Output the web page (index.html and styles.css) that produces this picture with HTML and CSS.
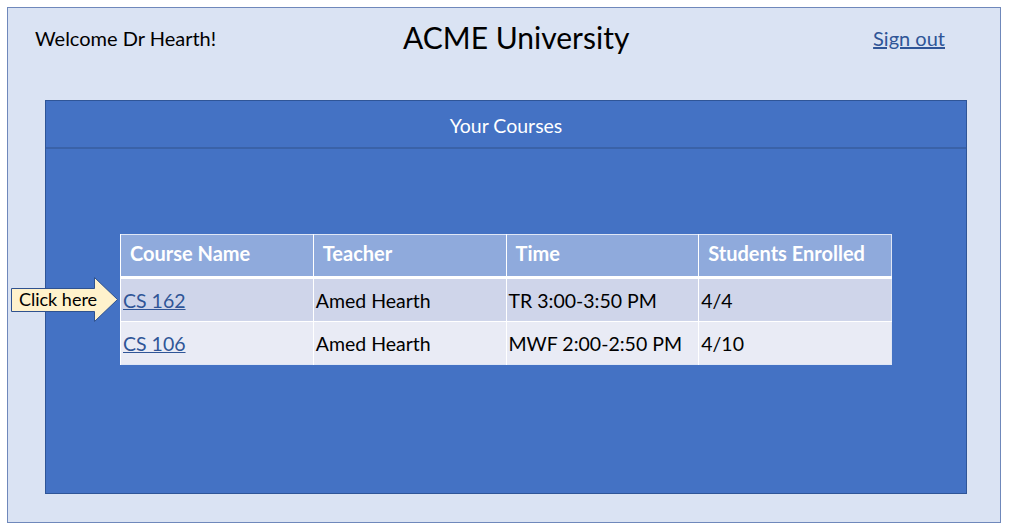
FILE: index.html
```html
<!DOCTYPE html>
<html lang="en">
<head>
  <meta charset="UTF-8" />
  <title>Your Courses - ACME University</title>
  <link rel="stylesheet" href="styles.css">
</head>
<body>

  <div class="frame">
    <header class="top-bar">
      <div class="welcome">Welcome Dr Hearth!</div>
      <h1 class="title">ACME University</h1>
      <a class="sign-out" href="#">Sign out</a>
    </header>

    <section class="panel">
      <div class="panel-head">Your Courses</div>
      <div class="panel-body">
        <table class="courses">
          <thead>
            <tr><th>Course Name</th><th>Teacher</th><th>Time</th><th>Students Enrolled</th></tr>
          </thead>
          <tbody>
            <tr class="odd">
              <td><a href="#">CS 162</a></td><td>Amed Hearth</td><td>TR 3:00-3:50 PM</td><td>4/4</td>
            </tr>
            <tr class="even">
              <td><a href="#">CS 106</a></td><td>Amed Hearth</td><td>MWF 2:00-2:50 PM</td><td>4/10</td>
            </tr>
          </tbody>
        </table>
      </div>
    </section>

    <!-- callout pointing at the first course -->
    <div class="callout">
      <svg width="108" height="46" viewBox="0 0 108 46">
        <path d="M0.5 11.5 H83.5 V0.5 L106.5 22.5 L83.5 44.5 V34.5 H0.5 Z" fill="#fff2cc" stroke="#2f528f" stroke-width="1"/>
      </svg>
      <span>Click here</span>
    </div>
  </div>

</body>
</html>
```

FILE: styles.css
```css
body {
  margin: 0;
  background: #fff;
  font-family: Lato, "Open Sans", sans-serif;
}

.frame {
  position: relative;
  margin: 7px;
  width: 992px;
  height: 514px;
  background: #dae3f3;
  border: 1px solid #6f88bb;
  display: flex;
  flex-direction: column;
}

.top-bar {
  display: grid;
  grid-template-columns: 368px auto 1fr;
  align-items: center;
  height: 92px;
  padding: 0 55px 0 27px;
  box-sizing: border-box;
}

.welcome {
  font-size: 20px;
  color: #000;
  margin-top: -32px;
}

.title {
  margin: 0;
  margin-top: -34px;
  font-size: 30px;
  font-weight: normal;
  color: #000;
}

.sign-out {
  justify-self: end;
  font-size: 20px;
  color: #2f5597;
  margin-top: -32px;
}

.panel {
  margin: 0 33px 28px 37px;
  flex: 1;
  background: #4472c4;
  border: 1px solid #2f5597;
  display: flex;
  flex-direction: column;
}

.panel-head {
  height: 46px;
  border-bottom: 2px solid #3a62a8;
  color: #fff;
  font-size: 19.5px;
  text-align: center;
  line-height: 50px;
}

.panel-body {
  padding-top: 85px;
  display: flex;
  justify-content: center;
}

.courses {
  border-collapse: collapse;
  width: 772px;
  table-layout: fixed;
  border: 1px solid #dfe6f5;
  font-size: 19.5px;
}

.courses th {
  background: #8faadc;
  color: #fff;
  font-size: 20px;
  font-weight: bold;
  text-align: left;
  height: 35px;
  padding: 0 9px 6px;
  border-left: 1px solid #fff;
  border-bottom: 3px solid #fff;
}

.courses td {
  height: 42px;
  padding: 0 2px;
  color: #000;
  border-left: 1px solid #fff;
  border-top: 1px solid #fff;
}

.courses tr.odd td {
  background: #cfd5ea;
}

.courses tr.even td {
  background: #e9ebf5;
  height: 42px;
}

.courses a {
  color: #2f5597;
}

.callout {
  position: absolute;
  left: 3px;
  top: 269px;
  width: 108px;
  height: 46px;
}

.callout svg {
  display: block;
}

.callout span {
  position: absolute;
  left: 0;
  top: 11px;
  width: 94px;
  line-height: 23px;
  text-align: center;
  font-size: 18px;
  color: #000;
}
```
